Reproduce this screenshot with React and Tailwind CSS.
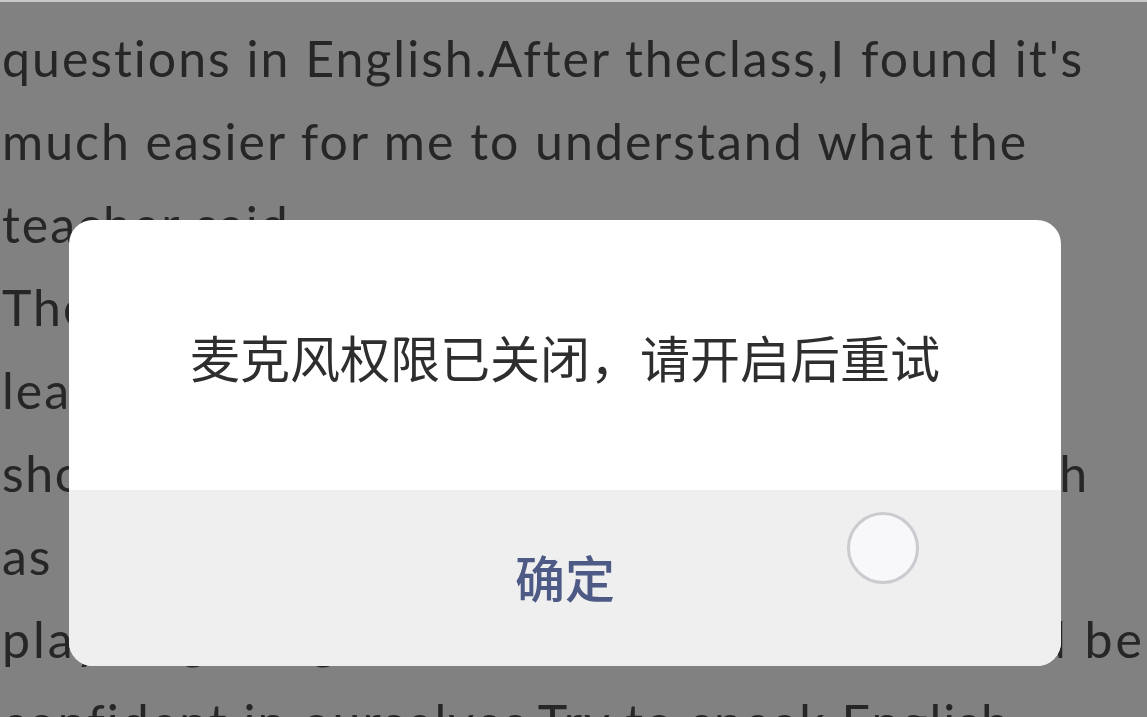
export default function App() {
  const lines = [
    { t: "questions in English.After theclass,I found it's", c: 'tracking-[2px]' },
    { t: 'much easier for me to understand what the', c: 'tracking-[2px]' },
    { t: 'teacher said.', c: 'tracking-[2px]' },
    { t: 'The teacher also taught us some ways of', c: 'tracking-[2px]' },
    { t: 'learning English well. She said that we', c: 'tracking-[2px]' },
    { t: 'should read more and speak more English with', c: 'tracking-[1.6px]' },
    { t: 'as reading is very helpful. We can also', c: 'tracking-[2px]' },
    { t: 'play English games with friends. We should be', c: 'tracking-[3px]' },
    { t: 'confident in ourselves.Try to speak English', c: 'tracking-[2px]' },
  ];

  return (
    <div className="relative w-[1147px] h-[717px] overflow-hidden bg-[#818181]">
      {/* top light strip */}
      <div className="h-[2px] bg-[#c9c9c9]" />

      {/* page text behind */}
      <div
        className="pt-[15px] pl-[2px] text-[50px] leading-[83px] text-[#262626] whitespace-nowrap"
        style={{ fontFamily: 'Lato, "Open Sans", sans-serif' }}
      >
        {lines.map((l, i) => (
          <div key={i} className={l.c}>
            {l.t}
          </div>
        ))}
      </div>

      {/* dialog */}
      <div className="absolute left-[69px] top-[220px] w-[992px] h-[446px] rounded-[24px] overflow-hidden flex flex-col bg-white">
        <div
          className="h-[270px] flex items-center justify-center text-[50px] text-[#2e2e2e] pt-[2px]"
          style={{ fontFamily: '"Noto Sans CJK SC", "Noto Sans", sans-serif' }}
        >
          麦克风权限已关闭，请开启后重试
        </div>
        <div className="relative flex-1 bg-[#efefef] flex items-center justify-center">
          <span
            className="text-[50px] font-medium text-[#4e5a86] -mt-[4px]"
            style={{ fontFamily: '"Noto Sans CJK SC", "Noto Sans", sans-serif' }}
          >
            确定
          </span>
          {/* touch indicator */}
          <div className="absolute left-[778px] top-[22px] w-[72px] h-[72px] rounded-full border-[3px] border-[#cacacf] bg-[#f8f8fa]" />
        </div>
      </div>
    </div>
  );
}
